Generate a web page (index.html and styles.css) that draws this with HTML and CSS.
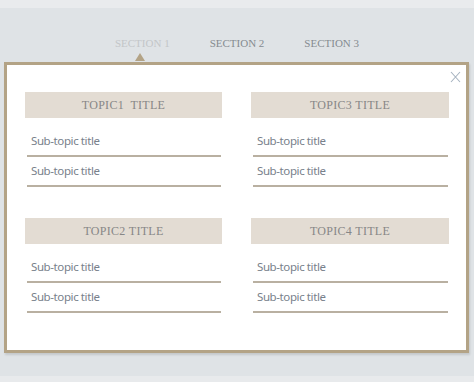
FILE: index.html
```html
<!DOCTYPE html>
<html lang="en">

<head>
    <meta charset="UTF-8">
    <meta name="viewport" content="width=device-width, initial-scale=1.0">
    <title>Mega menu</title>
    <link rel="stylesheet" href="styles.css">
</head>

<body>
    <div class="page">
        <!-- Top navigation -->
        <nav class="nav">
            <a class="nav-item active" href="#">SECTION 1</a>
            <a class="nav-item" href="#">SECTION 2</a>
            <a class="nav-item" href="#">SECTION 3</a>
        </nav>

        <!-- Dropdown panel -->
        <div class="panel">
            <svg class="close" width="11" height="12" viewBox="0 0 11 12">
                <path d="M1 1 L10 11 M10 1 L1 11" stroke="#a6b3c0" stroke-width="1.1" fill="none" />
            </svg>
            <div class="topics">
                <div class="topic">
                    <div class="topic-title">TOPIC1&nbsp; TITLE</div>
                    <div class="sub">Sub-topic title</div>
                    <div class="sub">Sub-topic title</div>
                </div>
                <div class="topic">
                    <div class="topic-title">TOPIC3 TITLE</div>
                    <div class="sub">Sub-topic title</div>
                    <div class="sub">Sub-topic title</div>
                </div>
                <div class="topic">
                    <div class="topic-title">TOPIC2 TITLE</div>
                    <div class="sub">Sub-topic title</div>
                    <div class="sub">Sub-topic title</div>
                </div>
                <div class="topic">
                    <div class="topic-title">TOPIC4 TITLE</div>
                    <div class="sub">Sub-topic title</div>
                    <div class="sub">Sub-topic title</div>
                </div>
            </div>
        </div>
        <div class="footer"></div>
    </div>
</body>

</html>
```

FILE: styles.css
```css
body {
    margin: 0;
    background: #dfe3e6;
    font-family: "Liberation Serif", serif;
}

.page {
    width: 474px;
    height: 382px;
    overflow: hidden;
    border-top: 8px solid #e9ebed;
    box-sizing: border-box;
}

.nav {
    display: flex;
    justify-content: center;
    gap: 40px;
    height: 54px;
    align-items: flex-start;
    padding-top: 29px;
    box-sizing: border-box;
}

.nav-item {
    position: relative;
    font-size: 11px;
    color: #858b90;
    text-decoration: none;
}

.nav-item.active {
    color: #c3c6c8;
}

.nav-item.active::after {
    content: "";
    position: absolute;
    left: 50%;
    margin-left: -7px;
    top: 16px;
    border-left: 5px solid transparent;
    border-right: 5px solid transparent;
    border-bottom: 8px solid #b3a386;
}

.panel {
    position: relative;
    margin: 0 5px 0 4px;
    height: 291px;
    box-sizing: border-box;
    background: #fff;
    border: 3px solid #b3a386;
    box-shadow: 1px 2px 2px rgba(0, 0, 0, 0.12);
    padding: 27px 18px 0 18px;
}

.close {
    position: absolute;
    top: 6px;
    right: 5px;
}

.topics {
    display: grid;
    grid-template-columns: 197px 198px;
    column-gap: 29px;
    row-gap: 31px;
}

.topic-title {
    height: 26px;
    line-height: 27px;
    background: #e3dcd3;
    text-align: center;
    font-size: 12px;
    letter-spacing: 0.3px;
    color: #878787;
}

.sub {
    margin: 0 1px 0 2px;
    height: 28px;
    line-height: 27px;
    padding-left: 4px;
    border-bottom: 2px solid #b9b0a1;
    font-family: "Noto Sans", sans-serif;
    font-size: 11.5px;
    letter-spacing: -0.4px;
    color: #78818b;
}

.sub:nth-child(2) {
    margin-top: 9px;
}

.footer {
    margin-top: 23px;
    height: 10px;
    background: #e8eaec;
}
```
